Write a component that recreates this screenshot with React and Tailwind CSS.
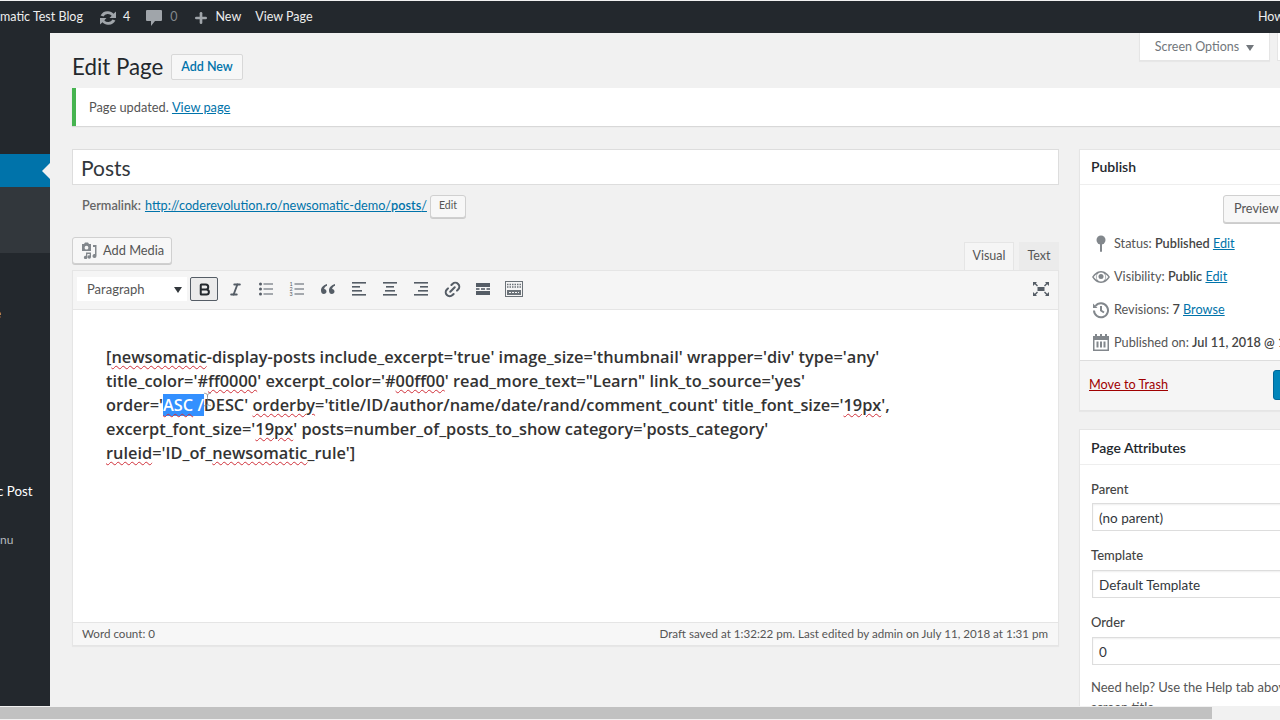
import React from 'react';
import { Plus, Link2, Italic, Bold, TextCursor } from 'lucide-react';

const Misspelled = ({ children }) => (
  <span className="underline decoration-wavy decoration-[#d0303a] decoration-1 underline-offset-2">{children}</span>
);

const Button = ({ children, className = '' }) => (
  <div className={`flex items-center border border-[#d0d0d0] bg-[#f7f7f7] rounded-[3px] shadow-[0_1px_0_#cccccc] text-[#555555] ${className}`}>
    {children}
  </div>
);

const Lines = ({ bars }) => (
  <svg width="16" height="16" viewBox="0 0 16 16" fill="#555d66">
    {bars.map(([x, w], i) => <rect key={i} x={x} y={1 + i * 4} width={w} height="1.6" />)}
  </svg>
);

const BulletList = () => (
  <svg width="16" height="16" viewBox="0 0 16 16" fill="#555d66">
    <circle cx="2.500" cy="3" r="1.500" /><circle cx="2.500" cy="8" r="1.500" /><circle cx="2.500" cy="13" r="1.500" />
    <rect x="5.500" y="2.500" width="9.500" height="1" /><rect x="5.500" y="7.500" width="9.500" height="1" /><rect x="5.500" y="12.500" width="9.500" height="1" />
  </svg>
);

const NumberList = () => (
  <svg width="16" height="16" viewBox="0 0 16 16" fill="#555d66">
    <text x="0.500" y="4.500" fontSize="5.500">1</text><text x="0.500" y="9.700" fontSize="5.500">2</text><text x="0.500" y="15" fontSize="5.500">3</text>
    <rect x="5.500" y="2.500" width="9.500" height="1" /><rect x="5.500" y="7.500" width="9.500" height="1" /><rect x="5.500" y="12.500" width="9.500" height="1" />
  </svg>
);

const QuoteIcon = () => (
  <svg width="16" height="16" viewBox="0 0 16 16" fill="#555d66">
    <path d="M7 3C3.500 4 1 6.300 1 9.500 1 12 2.300 13 3.800 13 5.300 13 6.500 12 6.500 10.500 6.500 9 5.400 8 4.100 8 4.300 6.500 5.500 5.300 7 4.700Z" />
    <path d="M15 3C11.500 4 9 6.300 9 9.500 9 12 10.300 13 11.800 13 13.300 13 14.500 12 14.500 10.500 14.500 9 13.400 8 12.100 8 12.300 6.500 13.500 5.300 15 4.700Z" />
  </svg>
);

const MoreIcon = () => (
  <svg width="16" height="16" viewBox="0 0 16 16" fill="#555d66">
    <rect x="1" y="2" width="14" height="4" /><rect x="1" y="10" width="14" height="4" />
    <rect x="1" y="7.200" width="3.500" height="1.600" /><rect x="6" y="7.200" width="4" height="1.600" /><rect x="11.500" y="7.200" width="3.500" height="1.600" />
  </svg>
);

const KitchenSink = () => (
  <svg width="18" height="16" viewBox="0 0 18 16" fill="none" stroke="#6b7278">
    <rect x="0.500" y="0.500" width="17" height="15" />
    <path d="M2 3.500h14M2 6h14" strokeDasharray="1.500 1" strokeWidth="1.500" />
    <rect x="2" y="9" width="14" height="5" fill="#6b7278" stroke="none" />
    <path d="M4 11.500h10" stroke="#f5f5f5" strokeDasharray="2 1" />
  </svg>
);

const FullscreenIcon = () => (
  <svg width="16" height="14" viewBox="0 0 16 14" fill="#555d66">
    <rect x="4.500" y="5" width="7" height="4" />
    <path d="M0 0h4L2.800 1.200 5 3.400 4 4.400 1.800 2.200 0 4ZM16 0h-4l1.200 1.200L11 3.400l1 1 2.200-2.200L16 4ZM0 14h4l-1.200-1.200L5 10.600l-1-1-2.200 2.200L0 10ZM16 14h-4l1.200-1.200L11 10.600l1-1 2.200 2.200L16 10Z" />
  </svg>
);

const MediaIcon = () => (
  <svg width="17" height="17" viewBox="0 0 17 17" fill="#82878c">
    <path d="M1 2h2l1-1.500h3L8 2h2v7H1Zm4.500 1.800a1.900 1.900 0 1 0 0 3.800 1.900 1.900 0 0 0 0-3.800Z" fillRule="evenodd" />
    <path d="M12 3h3.500v11a2 2 0 1 1-1.500-1.900V5h-2Z" />
    <path d="M5 10.500h5V15a1.700 1.700 0 1 1-1.300-1.600V12H6.300v3.500A1.700 1.700 0 1 1 5 13.800Z" />
  </svg>
);

const UpdatesIcon = () => (
  <svg width="20" height="20" viewBox="0 0 20 20" fill="#a0a5aa">
    <path d="M10.200 3.300c2.100 0 4 .9 5.300 2.400L18 3.500V10h-6.500l2.200-2.200A4.900 4.900 0 0 0 5.500 8.500L2.600 7.600a7.800 7.800 0 0 1 7.600-4.300Z" />
    <path d="M9.800 16.700c-2.100 0-4-.9-5.300-2.400L2 16.500V10h6.500l-2.200 2.200a4.900 4.900 0 0 0 8.200-.7l2.900.9a7.800 7.800 0 0 1-6.600 4.300Z" />
  </svg>
);

const CommentIcon = () => (
  <svg width="18" height="18" viewBox="0 0 18 18" fill="#a0a5aa">
    <path d="M2 1h14a1 1 0 0 1 1 1v9a1 1 0 0 1-1 1H10l-4 5v-5H2a1 1 0 0 1-1-1V2a1 1 0 0 1 1-1Z" />
  </svg>
);

const PinIcon = () => (
  <svg width="14" height="18" viewBox="0 0 14 18" fill="#82878c">
    <circle cx="7" cy="5" r="4.500" /><rect x="6" y="8" width="2" height="9" rx="1" />
  </svg>
);

const EyeIcon = () => (
  <svg width="18" height="14" viewBox="0 0 18 14" fill="#82878c">
    <path fillRule="evenodd" d="M9 1c4 0 7 3 9 6-2 3-5 6-9 6s-7-3-9-6c2-3 5-6 9-6Zm0 1.500A4.500 4.500 0 1 0 9 11.500 4.500 4.500 0 0 0 9 2.500ZM1.700 7c.8 1.100 1.800 2.200 3 3A6 6 0 0 1 4.700 4C3.500 4.800 2.500 5.900 1.700 7Zm14.600 0c-.8-1.100-1.800-2.200-3-3a6 6 0 0 1 0 6c1.200-.8 2.200-1.900 3-3Z" />
    <circle cx="9" cy="6.500" r="2.500" />
  </svg>
);

const HistoryIcon = () => (
  <svg width="18" height="18" viewBox="0 0 18 18" fill="none" stroke="#82878c" strokeWidth="2">
    <path d="M3.500 5A7 7 0 1 1 2 9.500" />
    <path d="M1 2.500V7h4.500Z" fill="#82878c" stroke="none" />
    <path d="M9 5v4.500l3 2" />
  </svg>
);

const CalendarIcon = () => (
  <svg width="16" height="17" viewBox="0 0 16 17" fill="#82878c">
    <path fillRule="evenodd" d="M0 2h2V0h2v2h3V0h2v2h3V0h2v2h2v15H0ZM1.500 6v9.500h13V6Z" />
    <rect x="3.500" y="7.500" width="2" height="6" /><rect x="7" y="7.500" width="2" height="6" /><rect x="10.500" y="7.500" width="2" height="6" />
  </svg>
);

const Sidebar = () => (
  <div className="w-[50px] shrink-0 bg-[#23282d] text-white text-[13.300px] whitespace-nowrap flex flex-col overflow-hidden">
    <div className="h-[121px] shrink-0" />
    <div className="h-[33px] shrink-0 bg-[#0073aa] flex justify-end items-center">
      <div className="w-0 h-0 border-y-[8px] border-y-transparent border-r-[8px] border-r-[#f1f1f1]" />
    </div>
    <div className="h-[66px] shrink-0 bg-[#32373c]" />
    <div className="h-[71px] shrink-0 flex items-end">
      <span className="-ml-[6px] text-[#d8dadb]">e</span>
    </div>
    <div className="h-[181px] shrink-0 flex items-end pb-[3px]">
      <span className="-ml-[3px]">c Post</span>
    </div>
    <div className="mt-[26px] flex">
      <span className="text-[12px] text-[#b4b9be]">nu</span>
    </div>
  </div>
);

const AdminBar = () => (
  <div className="h-[32px] mt-[1px] pt-[1px] shrink-0 bg-[#23282d] text-[12.500px] text-[#eeeeee] flex items-center justify-between whitespace-nowrap overflow-hidden">
    <div className="flex items-center">
      <span className="w-[85px]">matic Test Blog</span>
      <div className="ml-[13px] flex items-center gap-[5px]"><UpdatesIcon /><span>4</span></div>
      <div className="ml-[15px] flex items-center gap-[7px]"><CommentIcon /><span className="text-[#82878c]">0</span></div>
      <div className="ml-[15px] flex items-center gap-[7px]"><Plus size={16} strokeWidth={4} color="#a0a5aa" /><span>New</span></div>
      <span className="ml-[14px]">View Page</span>
    </div>
    <span className="w-[22px]">How</span>
  </div>
);

const ToolbarButton = ({ children, active }) => (
  <div className={`w-[28px] h-[24px] mr-[3px] flex items-center justify-center rounded-[2px] ${active ? 'bg-[#ebebeb] border border-[#555d66]' : ''}`}>
    {children}
  </div>
);

const Editor = () => (
  <div className="border border-[#e5e5e5] bg-white shadow-[0_1px_1px_rgba(0,0,0,0.04)]">
    <div className="h-[39px] bg-[#f5f5f5] border-b border-[#e5e5e5] flex items-center pl-[4px] pr-[9px] pb-[2px]">
      <div className="w-[110px] h-[24px] pt-[2px] bg-white flex items-center justify-between pl-[10px] pr-[5px] text-[13px] text-[#555555] mr-[3px]">
        <span>Paragraph</span>
        <div className="w-0 h-0 border-x-[4.500px] border-x-transparent border-t-[6px] border-t-[#32373c]" />
      </div>
      <ToolbarButton active><Bold size={15} strokeWidth={3.2} color="#23282d" /></ToolbarButton>
      <ToolbarButton><Italic size={15} strokeWidth={3} color="#555d66" /></ToolbarButton>
      <ToolbarButton><BulletList /></ToolbarButton>
      <ToolbarButton><NumberList /></ToolbarButton>
      <ToolbarButton><QuoteIcon /></ToolbarButton>
      <ToolbarButton><Lines bars={[[1, 14], [1, 8], [1, 10], [1, 14]]} /></ToolbarButton>
      <ToolbarButton><Lines bars={[[1, 14], [4, 8], [3, 10], [1, 14]]} /></ToolbarButton>
      <ToolbarButton><Lines bars={[[1, 14], [7, 8], [5, 10], [1, 14]]} /></ToolbarButton>
      <ToolbarButton><Link2 size={19} strokeWidth={2.6} color="#555d66" className="-rotate-45" /></ToolbarButton>
      <ToolbarButton><MoreIcon /></ToolbarButton>
      <ToolbarButton><KitchenSink /></ToolbarButton>
      <div className="ml-auto"><FullscreenIcon /></div>
    </div>
    <div className="h-[312px] px-[33px] pt-[35px] font-['Open_Sans',sans-serif] font-semibold text-[16.350px] leading-[24px] text-[#333333] whitespace-nowrap">
      <div>[<Misspelled>newsomatic</Misspelled>-display-posts include_excerpt='true' image_size='thumbnail' wrapper='div' type='any'</div>
      <div>title_color='#<Misspelled>ff0000</Misspelled>' excerpt_color='#<Misspelled>00ff00</Misspelled>' read_more_text="Learn" link_to_source='yes'</div>
      <div>
        order='<span className="bg-[#3390ff] text-white"><Misspelled>ASC</Misspelled> /</span>
        <span className="relative">
          DESC'
          <TextCursor size={15} strokeWidth={1} color="#777777" className="absolute -left-[4px] -top-[2px]" />
        </span> <Misspelled>orderby</Misspelled>='title/ID/author/name/date/rand/comment_count' title_font_size='<Misspelled>19px</Misspelled>',
      </div>
      <div>excerpt_font_size='<Misspelled>19px</Misspelled>' posts=number_of_posts_to_show category='posts_category'</div>
      <div><Misspelled>ruleid</Misspelled>='ID_of_<Misspelled>newsomatic</Misspelled>_rule']</div>
    </div>
    <div className="h-[23px] bg-[#f7f7f7] border-t border-[#e5e5e5] flex items-center justify-between pl-[9px] pr-[10px] text-[11.600px] text-[#555555] whitespace-nowrap">
      <span>Word count: 0</span>
      <span>Draft saved at 1:32:22 pm. Last edited by admin on July 11, 2018 at 1:31 pm</span>
    </div>
  </div>
);

const MetaRow = ({ icon, children }) => (
  <div className="h-[33px] flex items-center whitespace-nowrap">
    <div className="w-[23px] flex justify-center -ml-[2px]">{icon}</div>
    <div className="ml-[2px]">{children}</div>
  </div>
);

const PublishBox = () => (
  <div className="border border-[#e5e5e5] bg-white shadow-[0_1px_1px_rgba(0,0,0,0.04)] text-[12.700px] text-[#555555]">
    <div className="h-[35px] border-b border-[#eeeeee] flex items-center pl-[11px] pb-[2px] text-[14px] font-semibold text-[#23282d]">Publish</div>
    <div className="pl-[143px] pt-[10px] h-[42px]">
      <Button className="h-[28px] pl-[10px] w-[80px]">Preview</Button>
    </div>
    <div className="pl-[11px]">
      <MetaRow icon={<PinIcon />}><span>Status: <b className="font-semibold text-[#444444]">Published</b> <a className="text-[#0073aa] underline">Edit</a></span></MetaRow>
      <MetaRow icon={<EyeIcon />}><span>Visibility: <b className="font-semibold text-[#444444]">Public</b> <a className="text-[#0073aa] underline">Edit</a></span></MetaRow>
      <MetaRow icon={<HistoryIcon />}><span>Revisions: <b className="font-semibold text-[#444444]">7</b> <a className="text-[#0073aa] underline">Browse</a></span></MetaRow>
      <MetaRow icon={<CalendarIcon />}><span>Published on: <b className="font-semibold text-[#444444]">Jul 11, 2018 @ 13:31</b></span></MetaRow>
    </div>
    <div className="h-[50px] mt-[1px] pb-[2px] bg-[#f5f5f5] border-t border-[#dddddd] flex items-center pl-[9px]">
      <a className="w-[78px] text-[#a00000] underline whitespace-nowrap">Move to Trash</a>
      <div className="ml-[106px] w-[70px] h-[30px] bg-[#0085ba] border border-[#006799] rounded-[3px]" />
    </div>
  </div>
);

const Field = ({ value }) => (
  <div className="h-[28px] w-[240px] ml-[1px] pt-[2px] border border-[#dddddd] bg-white flex items-center pl-[6px] text-[13.500px] text-[#32373c] shadow-[inset_0_1px_2px_rgba(0,0,0,0.07)]">
    {value}
  </div>
);

const AttributesBox = () => (
  <div className="mt-[18px] border border-[#e5e5e5] bg-white shadow-[0_1px_1px_rgba(0,0,0,0.04)] text-[13px] text-[#444444] h-[300px]">
    <div className="h-[35px] border-b border-[#eeeeee] flex items-center pl-[11px] text-[14px] font-semibold text-[#23282d]">Page Attributes</div>
    <div className="pl-[11px] whitespace-nowrap">
      <div className="mt-[15px] h-[20px] font-medium">Parent</div>
      <div className="mt-[3px]"><Field value="(no parent)" /></div>
      <div className="mt-[15px] h-[20px] font-medium">Template</div>
      <div className="mt-[4px]"><Field value="Default Template" /></div>
      <div className="mt-[15px] h-[20px] font-medium">Order</div>
      <div className="mt-[4px]"><Field value="0" /></div>
      <div className="mt-[13px] h-[20px] text-[#555555]">Need help? Use the Help tab above the</div>
      <div className="h-[18px] text-[#555555]">screen title.</div>
    </div>
  </div>
);

const App = () => (
  <div className="h-[720px] w-[1280px] overflow-hidden flex flex-col bg-[#f1f1f1] text-[13px] text-[#444444] font-['Lato','Open_Sans',sans-serif]">
    <AdminBar />
    <div className="flex flex-1 min-h-0">
      <Sidebar />
      <div className="flex-1 min-w-0 overflow-hidden">
        <div className="flex justify-between pl-[22px] h-[55px]">
          <div className="flex items-center h-[28px] mt-[20px] gap-[8px]">
            <h1 className="text-[22.300px] text-[#23282d] whitespace-nowrap">Edit Page</h1>
            <div className="h-[26px] px-[9px] flex items-center border border-[#d8d8d8] bg-[#f7f7f7] rounded-[2px] text-[12.500px] font-semibold text-[#0073aa] whitespace-nowrap">Add New</div>
          </div>
          <div className="flex items-start gap-[7px] -mr-[67px]">
            <div className="h-[28px] w-[131px] pt-[2px] bg-white border border-[#e5e5e5] border-t-0 shadow-[0_1px_1px_rgba(0,0,0,0.04)] flex items-center justify-center gap-[7px] text-[12.500px] text-[#72777c] whitespace-nowrap">
              Screen Options
              <div className="w-0 h-0 border-x-[4.500px] border-x-transparent border-t-[6px] border-t-[#72777c]" />
            </div>
            <div className="h-[28px] w-[70px] bg-white border border-[#e5e5e5] border-t-0" />
          </div>
        </div>
        <div className="ml-[22px] h-[38px] pt-[1px] bg-white border-l-4 border-l-[#46b450] shadow-[0_1px_1px_rgba(0,0,0,0.1)] flex items-center pl-[13px] text-[12.800px] text-[#555555]">
          Page updated.&nbsp;<a className="text-[#0073aa] underline">View page</a>
        </div>
        <div className="flex pl-[22px] pt-[23px] gap-[20px]">
          <div className="w-[987px] shrink-0">
            <div className="h-[36px] pt-[1px] bg-white border border-[#dddddd] flex items-center pl-[8px] text-[21px] text-[#32373c]">Posts</div>
            <div className="h-[28px] mt-[7px] pl-[10px] flex items-center text-[12.700px] text-[#666666] whitespace-nowrap">
              <b className="font-semibold">Permalink:</b>
              <a className="ml-[4px] text-[#0073aa] underline">http://coderevolution.ro/newsomatic-demo/<b className="font-semibold">posts</b>/</a>
              <Button className="ml-[3px] h-[23px] w-[36px] justify-center text-[10.500px]">Edit</Button>
            </div>
            <div className="flex items-end justify-between mt-[17px] h-[33px]">
              <Button className="h-[27px] w-[100px] pl-[8px] gap-[5px] mb-[6px] text-[12.800px]"><MediaIcon />Add Media</Button>
              <div className="flex items-end">
                <div className="h-[28px] w-[50px] bg-[#f5f5f5] border border-[#e5e5e5] border-b-0 flex items-center justify-center text-[12.500px] text-[#555555]">Visual</div>
                <div className="h-[28px] w-[40px] ml-[5px] bg-[#ebebeb] flex items-center justify-center text-[12.500px] text-[#555555]">Text</div>
              </div>
            </div>
            <Editor />
          </div>
          <div className="w-[280px] shrink-0">
            <PublishBox />
            <AttributesBox />
          </div>
        </div>
      </div>
    </div>
    <div className="h-[14px] shrink-0 bg-[#f1f1f1] py-[1px]">
      <div className="h-full w-[1212px] bg-[#c1c1c1]" />
    </div>
  </div>
);

export default App;
